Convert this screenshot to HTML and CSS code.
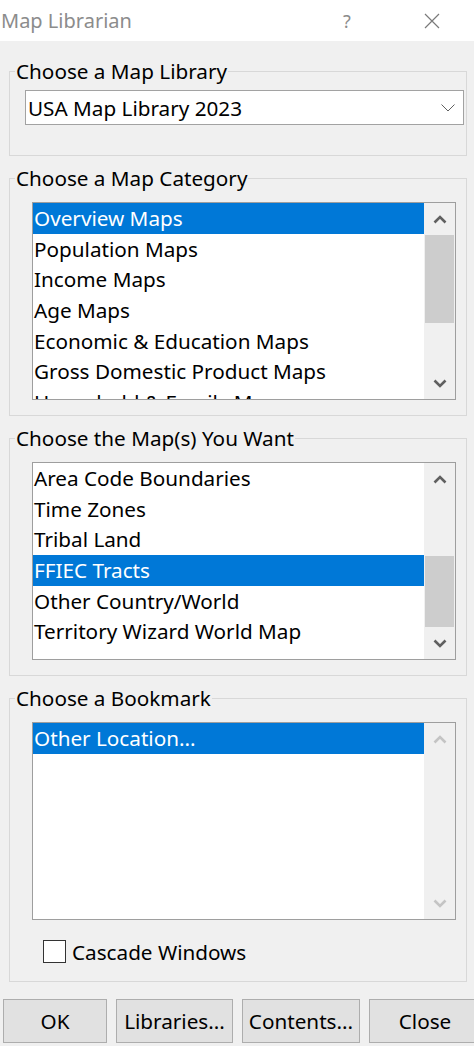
FILE: index.html
```html
<!DOCTYPE html>
<html lang="en">
<head>
    <meta charset="UTF-8">
    <meta name="viewport" content="width=device-width, initial-scale=1.0">
    <title>Map Librarian</title>

    <link rel="stylesheet" href="styles.css">
</head>
<body>
<div class="window">
    <div class="titlebar">
        <span class="title">Map Librarian</span>
        <span class="help">?</span>
        <span class="close">
            <svg width="16" height="16" viewBox="0 0 16 16"><path d="M1 1 L15 15 M15 1 L1 15" stroke="#7a7a7a" stroke-width="1.2" fill="none"/></svg>
        </span>
    </div>

    <div class="dialog">
        <fieldset class="group group-library">
            <legend>Choose a Map Library</legend>
            <div class="combo">
                <span class="combo-text">USA Map Library 2023</span>
                <svg class="combo-arrow" width="14" height="8" viewBox="0 0 14 8"><path d="M0.5 0.5 L7 7 L13.5 0.5" stroke="#606060" stroke-width="1" fill="none"/></svg>
            </div>
        </fieldset>

        <fieldset class="group">
            <legend>Choose a Map Category</legend>
            <div class="listbox">
                <ul class="items">
                    <li class="selected">Overview Maps</li>
                    <li>Population Maps</li>
                    <li>Income Maps</li>
                    <li>Age Maps</li>
                    <li>Economic &amp; Education Maps</li>
                    <li>Gross Domestic Product Maps</li>
                    <li>Household &amp; Family Maps</li>
                </ul>
                <div class="scrollbar">
                    <div class="arrow"><svg width="14" height="9" viewBox="0 0 14 9"><path d="M1.5 7.5 L7 2 L12.5 7.5" stroke="#606060" stroke-width="2.6" fill="none"/></svg></div>
                    <div class="track"><div class="thumb" style="margin-top: 0px; height: 88px"></div></div>
                    <div class="arrow"><svg width="14" height="9" viewBox="0 0 14 9"><path d="M1.5 1.5 L7 7 L12.5 1.5" stroke="#606060" stroke-width="2.6" fill="none"/></svg></div>
                </div>
            </div>
        </fieldset>

        <fieldset class="group">
            <legend>Choose the Map(s) You Want</legend>
            <div class="listbox">
                <ul class="items">
                    <li>Area Code Boundaries</li>
                    <li>Time Zones</li>
                    <li>Tribal Land</li>
                    <li class="selected">FFIEC Tracts</li>
                    <li>Other Country/World</li>
                    <li>Territory Wizard World Map</li>
                </ul>
                <div class="scrollbar">
                    <div class="arrow"><svg width="14" height="9" viewBox="0 0 14 9"><path d="M1.5 7.5 L7 2 L12.5 7.5" stroke="#606060" stroke-width="2.6" fill="none"/></svg></div>
                    <div class="track"><div class="thumb" style="margin-top: 61px; height: 71px"></div></div>
                    <div class="arrow"><svg width="14" height="9" viewBox="0 0 14 9"><path d="M1.5 1.5 L7 7 L12.5 1.5" stroke="#606060" stroke-width="2.6" fill="none"/></svg></div>
                </div>
            </div>
        </fieldset>

        <fieldset class="group group-bookmark">
            <legend>Choose a Bookmark</legend>
            <div class="listbox">
                <ul class="items">
                    <li class="selected">Other Location...</li>
                </ul>
                <div class="scrollbar disabled">
                    <div class="arrow"><svg width="14" height="9" viewBox="0 0 14 9"><path d="M1.5 7.5 L7 2 L12.5 7.5" stroke="#c4c4c4" stroke-width="2.6" fill="none"/></svg></div>
                    <div class="track"></div>
                    <div class="arrow"><svg width="14" height="9" viewBox="0 0 14 9"><path d="M1.5 1.5 L7 7 L12.5 1.5" stroke="#c4c4c4" stroke-width="2.6" fill="none"/></svg></div>
                </div>
            </div>
            <label class="check">
                <span class="check-box"></span>
                <span>Cascade Windows</span>
            </label>
        </fieldset>

        <div class="buttons">
            <div class="button btn-ok">OK</div>
            <div class="button btn-libraries">Libraries...</div>
            <div class="button btn-contents">Contents...</div>
            <div class="button btn-close">Close</div>
        </div>
    </div>
</div>
</body>
</html>
```

FILE: styles.css
```css
body {
    margin: 0;
    font-family: "Noto Sans", "Open Sans", sans-serif;
    font-size: 20.7px;
    color: #000;
    background-color: #f0f0f0;
}
.window {
    width: 474px;
    height: 1046px;
    overflow: hidden;
}
.titlebar {
    height: 41px;
    background-color: #fff;
    display: flex;
    align-items: center;
}
.title {
    flex: 1;
    padding-left: 1px;
    color: #8c8c8c;
    font-size: 20px;
}
.help {
    width: 20px;
    color: #8c8c8c;
    font-size: 18px;
    margin-right: 61px;
}
.close {
    display: flex;
    margin-right: 34px;
}
.dialog {
    padding: 17px 7px 0 9px;
    display: flex;
    flex-direction: column;
    gap: 9px;
}
.group {
    margin: 0;
    padding: 11px 10px 15px 22px;
    border: 1px solid #d8d8d8;
    min-width: 0;
}
.group legend {
    margin-left: -17px;
    padding: 0 1px;
    line-height: 26px;
}
.group-library {
    padding: 6px 2px 30px 15px;
}
.group-library legend {
    margin-left: -10px;
}
.combo {
    height: 33px;
    border: 1px solid #a2a2a2;
    background-color: #fff;
    display: flex;
    align-items: center;
    padding: 0 8px 0 2px;
}
.combo-text {
    flex: 1;
}
.listbox {
    height: 196px;
    border: 1px solid #9e9e9e;
    background-color: #fff;
    display: flex;
    overflow: hidden;
}
.items {
    list-style: none;
    margin: 0;
    padding: 0;
    flex: 1;
}
.items li {
    height: 30.7px;
    line-height: 30.7px;
    padding-left: 1px;
    white-space: nowrap;
}
.items li.selected {
    background-color: #0078d7;
    color: #fff;
}
.scrollbar {
    width: 31px;
    background-color: #f0f0f0;
    display: flex;
    flex-direction: column;
}
.arrow {
    height: 32px;
    display: flex;
    align-items: center;
    justify-content: center;
}
.track {
    flex: 1;
    padding: 0 1px;
}
.thumb {
    background-color: #cdcdcd;
}
.check {
    display: flex;
    align-items: center;
    gap: 6px;
    margin: 20px 0 0 11px;
    height: 23px;
}
.check-box {
    width: 21px;
    height: 21px;
    border: 1px solid #333;
    background-color: #fff;
}
.group-bookmark {
    padding-bottom: 18px;
}
.buttons {
    display: flex;
    gap: 9px;
    margin: 8px 0 0 -6px;
}
.button {
    height: 42px;
    line-height: 42px;
    text-align: center;
    border: 1px solid #adadad;
    background-color: #e1e1e1;
    flex-shrink: 0;
}
.btn-ok { width: 102px; }
.btn-libraries { width: 115px; }
.btn-contents { width: 116px; }
.btn-close { width: 110px; }
```
